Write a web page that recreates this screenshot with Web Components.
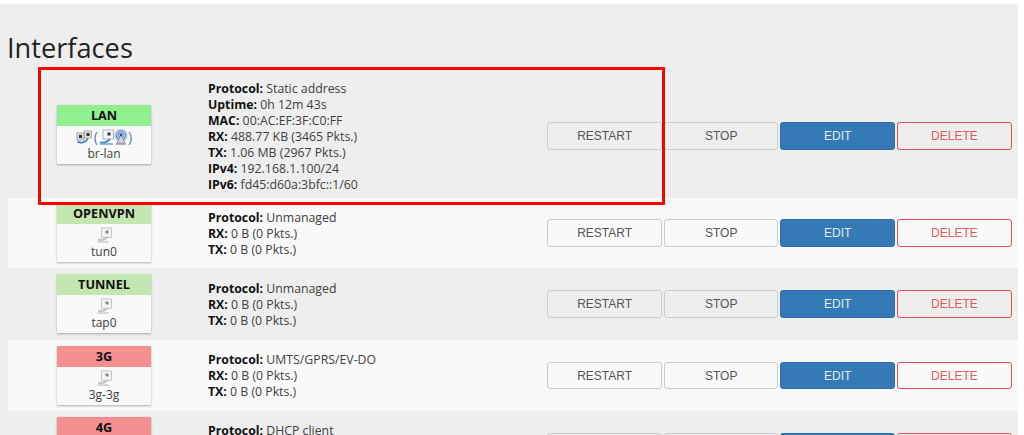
<!DOCTYPE html>
<html><head><meta charset="utf-8">
<style>
html,body{margin:0;padding:0;background:#fff;height:435px;overflow:hidden}
</style></head><body>
<iface-page>
<iface-row zone="LAN" color="#90f090" dev="br-lan" icon="bridge" height="124" style="--bg:#eee;--shift:3px;--drop:2px">
<b>Protocol:</b> Static address<br><b>Uptime:</b> 0h 12m 43s<br><b>MAC:</b> 00:AC:EF:3F:C0:FF<br><b>RX:</b> 488.77 KB (3465 Pkts.)<br><b>TX:</b> 1.06 MB (2967 Pkts.)<br><b>IPv4:</b> 192.168.1.100/24<br><b>IPv6:</b> fd45:d60a:3bfc::1/60
</iface-row>
<iface-row zone="OPENVPN" color="#c4e6b0" dev="tun0" height="70" style="--bg:#f9f9f9;--shift:2px;--drop:2px">
<b>Protocol:</b> Unmanaged<br><b>RX:</b> 0 B (0 Pkts.)<br><b>TX:</b> 0 B (0 Pkts.)
</iface-row>
<iface-row zone="TUNNEL" color="#c4e6b0" dev="tap0" height="72" style="--bg:#eee;--shift:1px;--drop:2px">
<b>Protocol:</b> Unmanaged<br><b>RX:</b> 0 B (0 Pkts.)<br><b>TX:</b> 0 B (0 Pkts.)
</iface-row>
<iface-row zone="3G" color="#f49090" dev="3g-3g" height="71" style="--bg:#f9f9f9">
<b>Protocol:</b> UMTS/GPRS/EV-DO<br><b>RX:</b> 0 B (0 Pkts.)<br><b>TX:</b> 0 B (0 Pkts.)
</iface-row>
<iface-row zone="4G" color="#f49090" dev="wwan0" height="71" style="--bg:#eee">
<b>Protocol:</b> DHCP client<br><b>RX:</b> 0 B (0 Pkts.)<br><b>TX:</b> 0 B (0 Pkts.)
</iface-row>
</iface-page>
<script>
class IfaceIcon extends HTMLElement{
  constructor(){super();this.attachShadow({mode:'open'})}
  connectedCallback(){
    const css=`<style>:host{display:flex;justify-content:center;align-items:center;height:18px;font:14px "Open Sans",sans-serif;color:#4a7fc0}svg{display:block}span{line-height:18px}</style>`;
    if(this.getAttribute('type')==='bridge'){
      this.shadowRoot.innerHTML=css+`<svg width="16" height="14" viewBox="0 0 16 14"><rect x="1" y="3" width="7" height="7" fill="#d8d8d8" stroke="#8a8f98" stroke-width=".7"/><rect x="8.500" y="1" width="7" height="7" fill="#e2e2e2" stroke="#8a8f98" stroke-width=".7"/><rect x="3" y="5" width="3" height="3" fill="#333"/><rect x="10.500" y="3" width="3" height="3" fill="#333"/><path d="M1.500 11.500c3 2 8 1.500 10.500-3" fill="none" stroke="#4a7fc0" stroke-width="1.600"/></svg><span style="margin:0 1px 0 2px">(</span><svg width="15" height="16" viewBox="0 0 15 16"><rect x="4" y="1" width="10.500" height="9" fill="#f6f6f6" stroke="#9aa0aa" stroke-width=".8"/><rect x="8.500" y="3.500" width="3" height="3" fill="#333"/><path d="M1 13c3 1.500 7 0 10-3" fill="none" stroke="#4a8ad0" stroke-width="1.800"/><path d="M1 15h13" stroke="#4a8ad0" stroke-width="1.200"/></svg><svg width="14" height="16" viewBox="0 0 14 16"><circle cx="7" cy="6.500" r="6.500" fill="#a9c8e8"/><circle cx="7" cy="6.500" r="4.500" fill="none" stroke="#5a8fc4" stroke-width=".9"/><circle cx="7" cy="6.500" r="2.500" fill="none" stroke="#5a8fc4" stroke-width=".9"/><path d="M7 6l-4 8h8z" fill="#d5d8de" stroke="#778" stroke-width=".7"/><path d="M2 15h10" stroke="#889" stroke-width="1.200"/><rect x="6" y="5" width="2" height="2" fill="#444"/></svg><span>)</span>`;
    } else {
      this.shadowRoot.innerHTML=css+`<svg width="15" height="16" viewBox="0 0 15 16"><rect x="4.500" y="1" width="10" height="9.500" fill="#f4f4f4" stroke="#bbb" stroke-width=".8"/><rect x="8.500" y="3.500" width="3" height="3" fill="#888"/><path d="M1 12.500c3.500 1 7.500 0 9.500-3" fill="none" stroke="#c4c4c4" stroke-width="2"/><path d="M.5 15h11" stroke="#c4c4c4" stroke-width="1.300"/></svg>`;
    }
  }
}
customElements.define('iface-icon',IfaceIcon);
class IfaceBadge extends HTMLElement{
  constructor(){super();this.attachShadow({mode:'open'})}
  connectedCallback(){
    const a=n=>this.getAttribute(n)||'';
    this.shadowRoot.innerHTML=`<style>
:host{display:block;width:94px;background:#f9f9f9;box-shadow:0 1px 2px rgba(0,0,0,.3);font:12px/16px "Open Sans",sans-serif;color:#404040;text-align:center}
.t{background:${a('color')};height:21px;line-height:21px;font-size:12.7px;font-weight:700;color:#111}
.b{padding:2px 0}
</style><div class="t">${a('zone')}</div><div class="b"><iface-icon type="${a('icon')}"></iface-icon><div>${a('dev')}</div></div>`;
  }
}
customElements.define('iface-badge',IfaceBadge);
class IfaceBtn extends HTMLElement{
  constructor(){super();this.attachShadow({mode:'open'});this.shadowRoot.innerHTML=`<style>
:host{display:flex;align-items:center;justify-content:center;box-sizing:border-box;width:114.600px;height:27.500px;border:1px solid #ccc;border-radius:3px;font:12px "Liberation Sans",Arial,sans-serif;color:#555;background:transparent}
:host([kind=edit]){background:#337ab7;border-color:#2e6da4;color:#e4edf5}
:host([kind=del]){border-color:#e05050;color:#e05a5a}
</style><slot></slot>`}
}
customElements.define('iface-btn',IfaceBtn);
class IfaceRow extends HTMLElement{
  constructor(){super();this.attachShadow({mode:'open'})}
  connectedCallback(){
    const a=n=>this.getAttribute(n)||'';
    this.shadowRoot.innerHTML=`<style>
:host{display:grid;grid-template-columns:200px 339.300px auto;align-items:center;height:${a('height')}px;background:var(--bg);font:12.300px/16px "Open Sans",sans-serif;color:#404040}
iface-badge{margin:0 0 var(--shift,0px) 49px}
.info{min-width:0;white-space:nowrap;margin-top:var(--drop,0px)}
::slotted(b){color:#111}
.acts{display:flex;gap:2px}
</style><iface-badge zone="${a('zone')}" color="${a('color')}" dev="${a('dev')}" icon="${a('icon')}"></iface-badge><div class="info"><slot></slot></div><div class="acts"><iface-btn>RESTART</iface-btn><iface-btn>STOP</iface-btn><iface-btn kind="edit">EDIT</iface-btn><iface-btn kind="del">DELETE</iface-btn></div>`;
  }
}
customElements.define('iface-row',IfaceRow);
class IfacePage extends HTMLElement{
  constructor(){super();this.attachShadow({mode:'open'});this.shadowRoot.innerHTML=`<style>
:host{display:block;position:relative;height:431px;margin:4px 6px 0 0;background:#eee;overflow:hidden;font-family:"Open Sans",sans-serif}
h2{margin:0;padding:26px 0 0 7px;height:44px;font:400 27.200px/36px "Open Sans",sans-serif;color:#222}
.list{margin-left:8px}
.mark{position:absolute;left:38px;top:63px;width:627px;height:138px;box-sizing:border-box;border:3px solid #f00;border-radius:1px}
</style><h2>Interfaces</h2><div class="list"><slot></slot></div><div class="mark"></div>`}
}
customElements.define('iface-page',IfacePage);
</script>
</body></html>
